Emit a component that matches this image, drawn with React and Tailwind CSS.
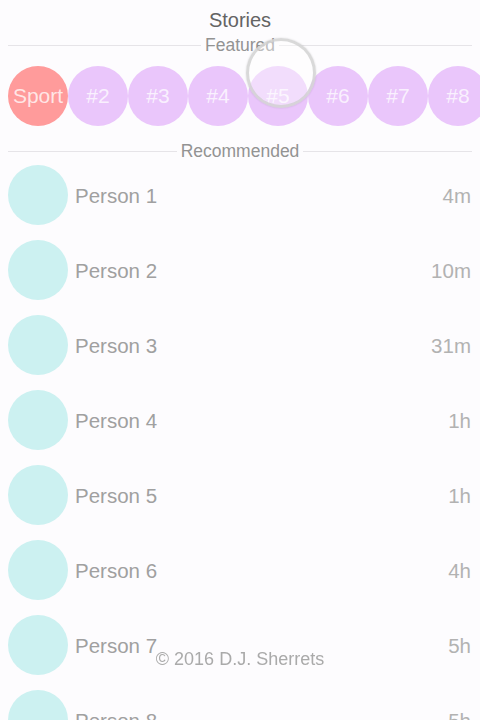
import React from "react";

const featured = ["Sport", "#2", "#3", "#4", "#5", "#6", "#7", "#8"];

const people = [
  { name: "Person 1", time: "4m" },
  { name: "Person 2", time: "10m" },
  { name: "Person 3", time: "31m" },
  { name: "Person 4", time: "1h" },
  { name: "Person 5", time: "1h" },
  { name: "Person 6", time: "4h" },
  { name: "Person 7", time: "5h" },
  { name: "Person 8", time: "5h" },
];

function Divider({ label }) {
  return (
    <div className="flex h-5 items-center px-2">
      <div className="h-px flex-1 bg-[#e6e4e8]" />
      <span className="px-1 text-[17.5px] leading-5 text-[#939393]">{label}</span>
      <div className="h-px flex-1 bg-[#e6e4e8]" />
    </div>
  );
}

export default function App() {
  return (
    <div className="relative min-h-screen bg-[#fdfcfe] font-['Liberation_Sans',Arial,sans-serif]">
      <header className="flex h-[35px] items-end justify-center pb-[3px]">
        <h1 className="text-[20px] leading-6 text-[#646464]">Stories</h1>
      </header>

      <Divider label="Featured" />

      <div className="mt-[11px] flex overflow-hidden pl-2">
        {featured.map((f, i) => (
          <div
            key={f}
            className={
              "flex h-[60px] w-[60px] shrink-0 items-center justify-center rounded-full text-[21px] text-white/75 " +
              (i === 0 ? "bg-[#ff9b9b]" : "bg-[#eac6fb]")
            }
          >
            {f}
          </div>
        ))}
      </div>

      <div className="mt-[15px]">
        <Divider label="Recommended" />
      </div>

      <ul className="mt-1 flex flex-col gap-[15px] px-2">
        {people.map((p) => (
          <li key={p.name} className="flex h-[60px] items-center">
            <div className="h-[60px] w-[60px] shrink-0 rounded-full bg-[#ccf1f1]" />
            <span className="ml-[7px] flex-1 pt-0.5 text-[20.5px] text-[#a0a0a0]">{p.name}</span>
            <span className="pr-px pt-0.5 text-[20.5px] text-[#b2b2b2]">{p.time}</span>
          </li>
        ))}
      </ul>

      {/* touch indicator */}
      <div className="pointer-events-none absolute left-[246px] top-[38px] h-[70px] w-[70px] rounded-full border-[3px] border-[#cfcfcf]/80 bg-white/40 shadow-[0_0_2px_rgba(0,0,0,0.15)]" />

      <footer className="pointer-events-none fixed bottom-[50px] left-0 right-0 text-center text-[18px] leading-[22px] text-[#aaa]">
        © 2016 D.J. Sherrets
      </footer>
    </div>
  );
}
